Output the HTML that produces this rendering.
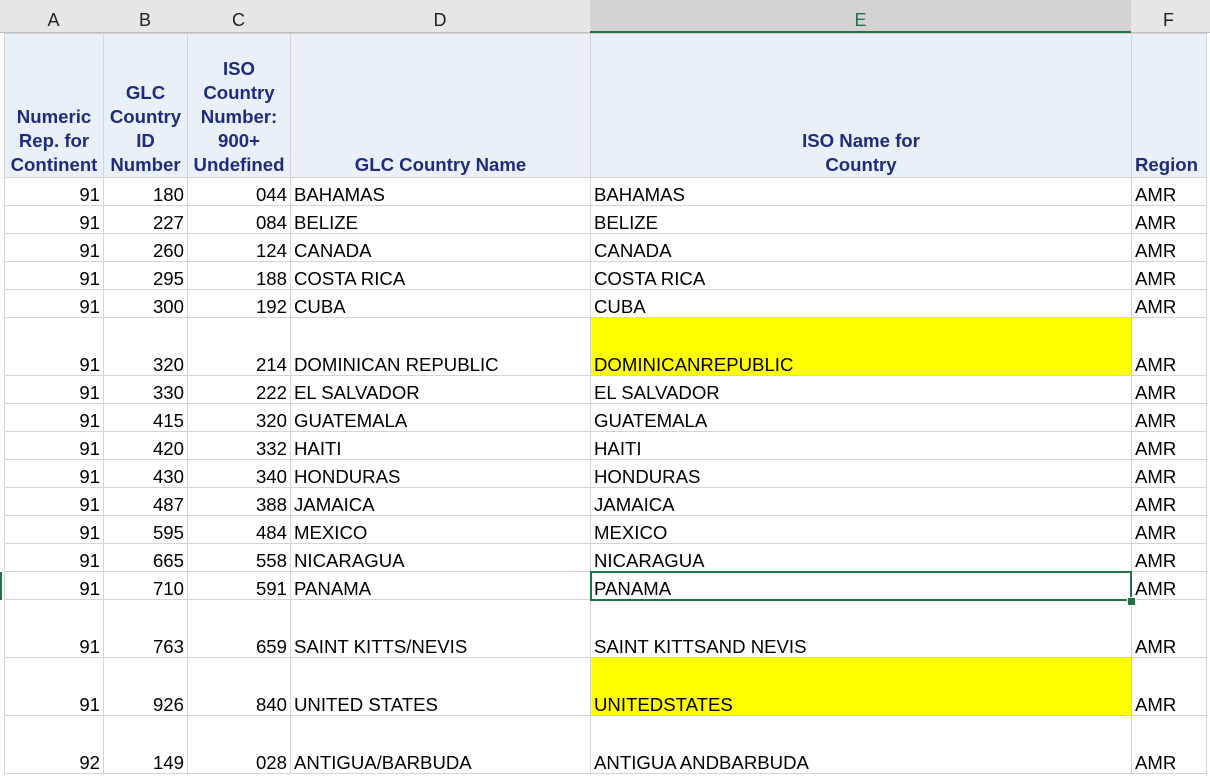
<!DOCTYPE html>
<html><head><style>
body{margin:0;width:1210px;height:779px;overflow:hidden;background:#fff;font-family:"Liberation Sans",Arial,sans-serif;position:relative}
.ch{position:absolute;top:0;height:33px;background:#e6e6e6;border-right:1px solid #c8c8c8;border-bottom:1px solid #bdbdbd;box-sizing:border-box;text-align:center;font-size:18px;line-height:40px;color:#222}
table{position:absolute;left:4px;top:33px;border-collapse:collapse;table-layout:fixed;width:1203px}
td{border:1px solid #d4d4d4;font-size:18.6px;vertical-align:bottom;padding:0 3px 0 3px;height:27px;line-height:21px;white-space:nowrap;overflow:hidden;color:#000}
tr.h td{background:#eaf0f8;color:#1f2c7c;font-weight:bold;text-align:center;font-size:18.6px;line-height:24px;height:143px;padding:0 1px 0 1px;white-space:normal}
tr.t td{height:57px}
.r{text-align:right}
.y{background:#ffff00}
</style></head><body>
<div class="ch" style="left:0;width:5px;background:#e6e6e6"></div>
<div class="ch" style="left:4px;width:100px">A</div>
<div class="ch" style="left:103px;width:85px">B</div>
<div class="ch" style="left:187px;width:104px">C</div>
<div class="ch" style="left:290px;width:301px">D</div>
<div class="ch" style="left:590px;width:542px;background:#d3d3d3;color:#217346;border-bottom:2px solid #217346">E</div>
<div class="ch" style="left:1131px;width:76px">F</div>
<div class="ch" style="left:1206px;width:4px;border-right:none"></div>
<table>
<colgroup><col style="width:99px"><col style="width:84px"><col style="width:103px"><col style="width:300px"><col style="width:541px"><col style="width:75px"></colgroup>
<tr class="h"><td>Numeric Rep. for Continent</td><td>GLC Country ID Number</td><td>ISO Country Number: 900+ Undefined</td><td>GLC Country Name</td><td>ISO Name for<br>Country</td><td style="text-align:left;padding-left:3px">Region</td></tr>
<tr><td class="r">91</td><td class="r">180</td><td class="r">044</td><td>BAHAMAS</td><td>BAHAMAS</td><td>AMR</td></tr>
<tr><td class="r">91</td><td class="r">227</td><td class="r">084</td><td>BELIZE</td><td>BELIZE</td><td>AMR</td></tr>
<tr><td class="r">91</td><td class="r">260</td><td class="r">124</td><td>CANADA</td><td>CANADA</td><td>AMR</td></tr>
<tr><td class="r">91</td><td class="r">295</td><td class="r">188</td><td>COSTA RICA</td><td>COSTA RICA</td><td>AMR</td></tr>
<tr><td class="r">91</td><td class="r">300</td><td class="r">192</td><td>CUBA</td><td>CUBA</td><td>AMR</td></tr>
<tr class="t"><td class="r">91</td><td class="r">320</td><td class="r">214</td><td>DOMINICAN REPUBLIC</td><td class="y">DOMINICANREPUBLIC</td><td>AMR</td></tr>
<tr><td class="r">91</td><td class="r">330</td><td class="r">222</td><td>EL SALVADOR</td><td>EL SALVADOR</td><td>AMR</td></tr>
<tr><td class="r">91</td><td class="r">415</td><td class="r">320</td><td>GUATEMALA</td><td>GUATEMALA</td><td>AMR</td></tr>
<tr><td class="r">91</td><td class="r">420</td><td class="r">332</td><td>HAITI</td><td>HAITI</td><td>AMR</td></tr>
<tr><td class="r">91</td><td class="r">430</td><td class="r">340</td><td>HONDURAS</td><td>HONDURAS</td><td>AMR</td></tr>
<tr><td class="r">91</td><td class="r">487</td><td class="r">388</td><td>JAMAICA</td><td>JAMAICA</td><td>AMR</td></tr>
<tr><td class="r">91</td><td class="r">595</td><td class="r">484</td><td>MEXICO</td><td>MEXICO</td><td>AMR</td></tr>
<tr><td class="r">91</td><td class="r">665</td><td class="r">558</td><td>NICARAGUA</td><td>NICARAGUA</td><td>AMR</td></tr>
<tr><td class="r">91</td><td class="r">710</td><td class="r">591</td><td>PANAMA</td><td>PANAMA</td><td>AMR</td></tr>
<tr class="t"><td class="r">91</td><td class="r">763</td><td class="r">659</td><td>SAINT KITTS/NEVIS</td><td>SAINT KITTSAND NEVIS</td><td>AMR</td></tr>
<tr class="t"><td class="r">91</td><td class="r">926</td><td class="r">840</td><td>UNITED STATES</td><td class="y">UNITEDSTATES</td><td>AMR</td></tr>
<tr class="t"><td class="r">92</td><td class="r">149</td><td class="r">028</td><td>ANTIGUA/BARBUDA</td><td>ANTIGUA ANDBARBUDA</td><td>AMR</td></tr>
</table>
<div style="position:absolute;left:590px;top:571px;width:542px;height:30px;border:2px solid #217346;box-sizing:border-box"></div>
<div style="position:absolute;left:1127px;top:597px;width:7px;height:7px;background:#217346;border:1px solid #fff"></div>
<div style="position:absolute;left:0;top:572px;width:2px;height:28px;background:#217346"></div>
</body></html>
